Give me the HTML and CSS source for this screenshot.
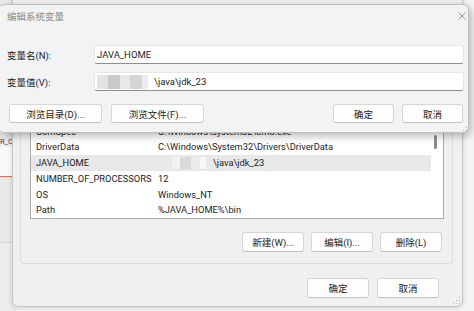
FILE: index.html
```html
<!DOCTYPE html>
<html lang="zh-CN">
<head>
  <meta charset="UTF-8">
  <title>编辑系统变量</title>
  <link rel="stylesheet" href="styles.css">
</head>
<body>
  <div class="desk">
    <!-- Window peeking out on the left -->
    <div class="side-win">
      <p class="side-text">R_C</p>
      <div class="side-white"></div>
      <div class="side-grey"></div>
    </div>

    <!-- little bits of other windows along the top edge -->
    <div class="peek peek-left"><span></span></div>
    <div class="peek peek-right"></div>

    <!-- Environment variables window (behind) -->
    <div class="env-win">
      <div class="group">
        <div class="list">
          <div class="rows">
            <div class="row"><span class="name">ComSpec</span><span class="value">C:\Windows\system32\cmd.exe</span></div>
            <div class="row"><span class="name">DriverData</span><span class="value">C:\Windows\System32\Drivers\DriverData</span></div>
            <div class="row selected"><span class="name">JAVA_HOME</span><span class="value"><i class="blur blur-list"></i>\java\jdk_23</span></div>
            <div class="row"><span class="name">NUMBER_OF_PROCESSORS</span><span class="value">12</span></div>
            <div class="row"><span class="name">OS</span><span class="value">Windows_NT</span></div>
            <div class="row"><span class="name">Path</span><span class="value">%JAVA_HOME%\bin</span></div>
          </div>
          <div class="track"><div class="thumb"></div></div>
        </div>
        <div class="group-buttons">
          <button class="btn">新建(<u>W</u>)...</button>
          <button class="btn">编辑(<u>I</u>)...</button>
          <button class="btn">删除(<u>L</u>)</button>
        </div>
      </div>
      <div class="footer">
        <button class="btn">确定</button>
        <button class="btn">取消</button>
      </div>
      <svg class="grip" width="8" height="8" viewBox="0 0 8 8">
        <rect x="6" y="0" width="1" height="1" fill="#b5b5b5"/>
        <rect x="3" y="3" width="1" height="1" fill="#b5b5b5"/>
        <rect x="6" y="3" width="1" height="1" fill="#b5b5b5"/>
        <rect x="0" y="6" width="1" height="1" fill="#b5b5b5"/>
        <rect x="3" y="6" width="1" height="1" fill="#b5b5b5"/>
        <rect x="6" y="6" width="1" height="1" fill="#b5b5b5"/>
      </svg>
    </div>

    <!-- Edit system variable dialog (front) -->
    <div class="dialog">
      <div class="titlebar">
        <span class="title">编辑系统变量</span>
        <svg class="close" width="8" height="8" viewBox="0 0 8 8">
          <path d="M0.5 0.5 L7.5 7.5 M7.5 0.5 L0.5 7.5" stroke="#8a8a8a" stroke-width="0.9" fill="none"/>
        </svg>
      </div>
      <div class="dialog-body">
        <div class="field">
          <label class="label">变量名(<u>N</u>):</label>
          <div class="input">JAVA_HOME</div>
        </div>
        <div class="field">
          <label class="label">变量值(<u>V</u>):</label>
          <div class="input"><i class="blur blur-input"></i>\java\jdk_23</div>
        </div>
        <div class="dialog-buttons">
          <button class="btn wide">浏览目录(<u>D</u>)...</button>
          <button class="btn wide">浏览文件(<u>F</u>)...</button>
          <button class="btn push">确定</button>
          <button class="btn">取消</button>
        </div>
      </div>
      <svg class="grip grip-dialog" width="8" height="8" viewBox="0 0 8 8">
        <rect x="6" y="3" width="1" height="1" fill="#b5b5b5"/>
        <rect x="3" y="6" width="1" height="1" fill="#b5b5b5"/>
        <rect x="6" y="6" width="1" height="1" fill="#b5b5b5"/>
      </svg>
    </div>
  </div>
</body>
</html>
```

FILE: styles.css
```css
* {
  box-sizing: border-box;
}
body {
  margin: 0;
  font-family: Roboto, "Noto Sans CJK SC", sans-serif;
  font-size: 9.5px;
  color: #1b1b1b;
}
u {
  text-decoration: none; /* access keys are not underlined */
}
.desk {
  position: relative;
  width: 474px;
  height: 311px;
  overflow: hidden;
  background: #f5f5f5;
}

/* window on the left edge */
.side-win {
  position: absolute;
  left: 0;
  top: 0;
  width: 16px;
  height: 311px;
  background: #ececec;
  display: flex;
  flex-direction: column;
}
.side-text {
  margin: 137px 0 0 0;
  height: 10px;
  line-height: 10px;
  font-size: 7.5px;
  color: #444;
  white-space: nowrap;
}
.side-white {
  height: 30px;
  background: #f9f9f9;
  border-bottom: 1px solid #e26a62;
}
.side-grey {
  height: 66px;
  background: #e9e9e9;
  border-bottom: 1px solid #d6d6d6;
}

.peek {
  position: absolute;
  top: 0;
  height: 5px;
  border: 1px solid #c4c4c4;
  border-top: none;
  background: #f2f2f2;
}
.peek-left {
  left: 12px;
  width: 19px;
}
.peek-left span {
  display: block;
  width: 11px;
  height: 4px;
  border-right: 1px solid #c4c4c4;
}
.peek-right {
  left: 442px;
  width: 14px;
}

/* environment variables window */
.env-win {
  position: absolute;
  left: 12px;
  top: -20px;
  width: 451px;
  height: 327px;
  background: #f0f0f0;
  border: 1px solid #c6c6c6;
  border-radius: 0 0 6px 6px;
  box-shadow: 0 1px 5px rgba(0, 0, 0, 0.15);
  display: flex;
  flex-direction: column;
  justify-content: flex-end;
  padding: 0 9px 8px 7px;
}
.group {
  border: 1px solid #dcdcdc;
  border-radius: 3px;
  padding: 12px 8px 11px 9px;
}
.list {
  height: 128px;
  background: #fff;
  border: 1px solid #ababab;
  display: flex;
}
.rows {
  flex: 1;
  display: flex;
  flex-direction: column;
  justify-content: flex-end;
  overflow: hidden;
}
.row {
  height: 15.75px;
  line-height: 15.75px;
  display: flex;
  white-space: nowrap;
  font-size: 9.3px;
}
.row.selected {
  background: #e8e8e8;
}
.name {
  width: 127px;
  padding-left: 5px;
}
.value {
  display: flex;
  align-items: center;
}
.track {
  width: 12px;
}
.thumb {
  width: 3px;
  height: 14px;
  margin: 43px 0 0 3px;
  border-radius: 2px;
  background: #8c8c8c;
}
.blur {
  display: inline-block;
}
.blur-list {
  width: 48px;
  height: 12px;
  margin-right: 7px;
  background: linear-gradient(90deg, #e9e9e9 0 14px, #f1f1f1 14px 22px, #d9d9d9 22px 33px, #ebebeb 33px 42px, #f6f6f6 42px);
}
.blur-input {
  width: 51px;
  height: 14px;
  margin-right: 6px;
  background: linear-gradient(90deg, #e3e3e3 0 11px, #cacaca 11px 23px, #e8e8e8 23px 33px, #d4d4d4 33px 45px, #ededed 45px);
}
.group-buttons {
  margin-top: 13px;
  display: flex;
  justify-content: flex-end;
  gap: 7px;
  padding-right: 2px;
}
.footer {
  margin-top: 14px;
  display: flex;
  justify-content: flex-end;
  gap: 8px;
  padding-right: 14px;
}
.btn {
  width: 62px;
  height: 20px;
  padding: 0;
  font-family: inherit;
  font-size: 9.5px;
  color: #1b1b1b;
  background: #fdfdfd;
  border: 1px solid #d6d6d6;
  border-bottom-color: #c2c2c2;
  border-radius: 3px;
}
.grip {
  position: absolute;
  right: 1px;
  bottom: 1px;
}

/* edit dialog */
.dialog {
  position: absolute;
  left: -2px;
  top: 4px;
  width: 471px;
  height: 129px;
  background: #f3f3f3;
  border: 1px solid #bfbfbf;
  border-radius: 6px;
  box-shadow: 2px 3px 8px rgba(0, 0, 0, 0.28);
}
.titlebar {
  height: 22px;
  display: flex;
  align-items: center;
  justify-content: space-between;
  padding: 0 2px 0 8px;
}
.title {
  color: #8a8a8a;
}
.dialog-body {
  padding: 18px 4px 0 8px;
  display: flex;
  flex-direction: column;
  gap: 8px;
}
.field {
  display: flex;
  align-items: center;
}
.label {
  width: 87px;
}
.input {
  flex: 1;
  height: 19px;
  display: flex;
  align-items: center;
  padding-left: 2px;
  background: #fff;
  border: 1px solid #e6e6e6;
  border-bottom-color: #8d8d8d;
  border-radius: 3px;
}
.dialog-buttons {
  margin: 5px 1px 0 2px;
  display: flex;
  gap: 8px;
}
.dialog-buttons .btn {
  width: 61px;
  height: 19px;
}
.dialog-buttons .btn.wide {
  width: 93px;
}
.dialog-buttons .btn.wide + .btn.wide {
  margin-left: 1px;
}
.push {
  margin-left: auto;
}
.grip-dialog {
  right: 0;
  bottom: 0;
}
```
